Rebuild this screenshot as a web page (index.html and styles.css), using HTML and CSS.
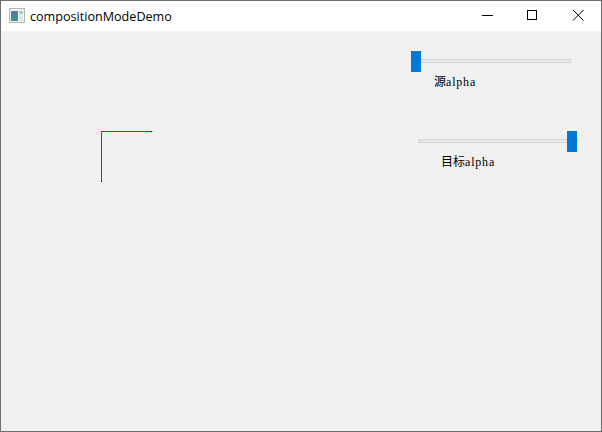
FILE: index.html
```html
<!DOCTYPE html>
<html lang="en">
<head>
  <meta charset="UTF-8">
  <meta name="viewport" content="width=device-width, initial-scale=1.0">
  <title>compositionModeDemo</title>
  <link rel="stylesheet" href="styles.css">
</head>
<body>
<div class="window">
  <header class="titlebar">
    <svg class="app-icon" width="16" height="15" viewBox="0 0 16 15">
      <rect x="0.5" y="0.5" width="15" height="14" fill="#f4f4f4" stroke="#b4b4b4"/>
      <rect x="2" y="3" width="7" height="10" fill="#3f8f94"/>
      <rect x="2" y="3" width="7" height="4" fill="#4f7fa8"/>
      <rect x="10" y="3" width="4" height="3" fill="#a9cfc4"/>
      <rect x="10" y="7" width="4" height="6" fill="#dfe8e4"/>
    </svg>
    <span class="title">compositionModeDemo</span>
    <div class="controls">
      <svg class="ctl" width="46" height="30" viewBox="0 0 46 30">
        <path d="M19 14.5h11" stroke="#000" fill="none"/>
      </svg>
      <svg class="ctl" width="46" height="30" viewBox="0 0 46 30">
        <rect x="18.5" y="9.5" width="9" height="9" stroke="#000" fill="none"/>
      </svg>
      <svg class="ctl" width="46" height="30" viewBox="0 0 46 30">
        <path d="M18 9l10.5 10.5M28.5 9L18 19.5" stroke="#000" fill="none"/>
      </svg>
    </div>
  </header>

  <div class="client">
    <svg class="corner" width="52" height="52" viewBox="0 0 52 52">
      <path d="M50 .5H.5V50" stroke="#e01010" fill="none"/>
      <path d="M50 0h1v1h-1zM0 50h1v1h-1z" fill="#000"/>
    </svg>

    <div class="sliders">
      <section class="slider-group first">
        <div class="slider">
          <div class="groove"></div>
          <div class="handle"></div>
        </div>
        <p class="label">源<span class="latin">alpha</span></p>
      </section>
      <section class="slider-group second">
        <div class="slider at-end">
          <div class="groove"></div>
          <div class="handle"></div>
        </div>
        <p class="label">目标<span class="latin">alpha</span></p>
      </section>
    </div>
  </div>
</div>
</body>
</html>
```

FILE: styles.css
```css
* {
  box-sizing: border-box;
}

html, body {
  margin: 0;
  height: 100%;
}

.window {
  height: 432px;
  width: 602px;
  display: flex;
  flex-direction: column;
  border: 1px solid #6e6e6e;
  background: #f0f0f0;
  overflow: hidden;
}

/* title bar */
.titlebar {
  height: 30px;
  flex: none;
  display: flex;
  align-items: center;
  background: #fff;
}

.app-icon {
  margin-left: 8px;
  margin-top: -1px;
}

.title {
  margin-left: 5px;
  font: 12.6px "Open Sans", "Noto Sans", sans-serif;
  color: #000;
}

.controls {
  margin-left: auto;
  display: flex;
}

.ctl {
  display: block;
}

/* client area */
.client {
  flex: 1;
  display: flex;
  justify-content: space-between;
}

.corner {
  display: block;
  margin: 100px 0 0 100px;
}

.sliders {
  width: 190px;
  padding-top: 20px;
}

.slider-group {
  margin: 0;
}

.slider-group.second {
  margin-top: 39px;
  margin-left: 7px;
}

.slider {
  position: relative;
  width: 160px;
  height: 21px;
  padding-top: 8px;
}

.groove {
  width: 100%;
  height: 4px;
  background: #e7e7e7;
  border: 1px solid #d6d6d6;
}

/* handle sits over the groove */
.handle {
  position: absolute;
  left: 0;
  top: 0;
  width: 10px;
  height: 21px;
  background: #0078d7;
}

.at-end .handle {
  left: 149px;
}

.label {
  margin: 0 0 0 23px;
  height: 20px;
  font: 12px/17px "Noto Sans CJK SC", sans-serif;
  color: #000;
}

.latin {
  font-family: "Liberation Serif", serif;
  letter-spacing: 0.8px;
}
```
